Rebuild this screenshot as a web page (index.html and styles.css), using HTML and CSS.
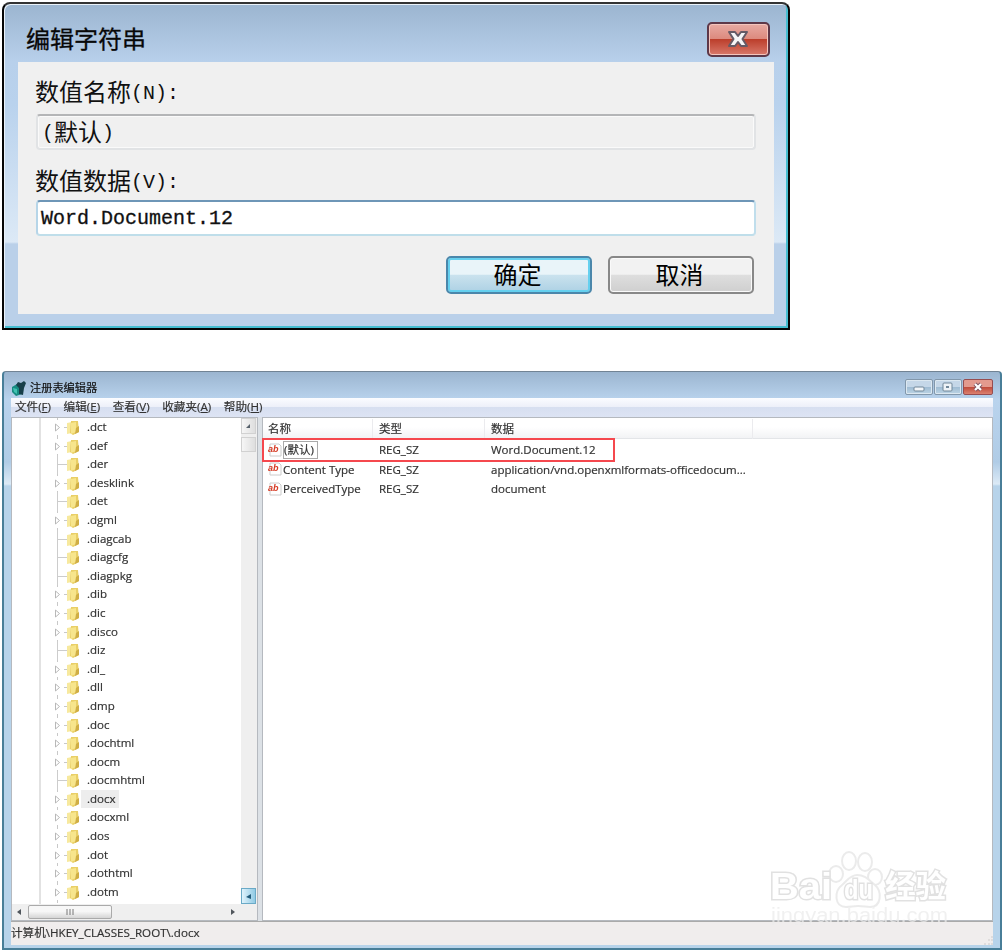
FILE: index.html
```html
<!DOCTYPE html>
<html lang="zh-CN">
<head>
<meta charset="utf-8">
<title>注册表编辑器</title>
<link rel="stylesheet" href="styles.css">
</head>
<body>
<main class="page">
<section class="dialog">
  <header class="dialog-title"><h1>编辑字符串</h1>
    <button class="dialog-close" aria-label="关闭"><svg width="24" height="20" viewBox="0 0 24 20"><path d="M2 2h6l3 4 3-4h6l-4.500 7 4.500 7h-6l-3-4-3 4H2l4.500-7z" fill="#f5f5f7" stroke="#655a66" stroke-width="2" stroke-linejoin="round"/></svg></button>
  </header>
  <div class="client">
    <div class="label">数值名称<span>(N):</span></div>
    <div class="field readonly"><span>(</span>默认<span>)</span></div>
    <div class="label second">数值数据<span>(V):</span></div>
    <div class="field edit">Word.Document.12</div>
    <div class="actions"><button class="btn primary">确定</button><button class="btn">取消</button></div>
  </div>
</section>

<section class="regedit">
  <header class="titlebar">
    <svg class="app-icon" width="16" height="16" viewBox="0 0 16 16"><path d="M1 7l5-3 4 2 1 8-6 2-4-4z" fill="#178b82"/><path d="M7 2l3 1 3-2 2 2-2 5-1 7-4-1V8L5 5z" fill="#173f49"/><path d="M2 8l4 1v5l-3-2z" fill="#40c4b2"/></svg>
    <span class="caption">注册表编辑器</span>
    <div class="controls">
      <i><svg width="26" height="14"><rect x="8" y="7" width="10" height="4" rx="1" fill="#f2f5f8" stroke="#718799"/></svg></i>
      <i><svg width="26" height="14"><rect x="8" y="3" width="9" height="8" rx="1" fill="#eef3f7" stroke="#718799"/><rect x="11" y="6" width="3" height="2" fill="#718799"/></svg></i>
      <i class="red"><svg width="28" height="14"><path d="M11 4l6 6m0-6l-6 6" stroke="#7d5360" stroke-width="4"/><path d="M11 4l6 6m0-6l-6 6" stroke="#fff" stroke-width="2.200"/></svg></i>
    </div>
  </header>
  <nav class="menu"><span>文件(<u>F</u>)</span><span>编辑(<u>E</u>)</span><span>查看(<u>V</u>)</span><span>收藏夹(<u>A</u>)</span><span>帮助(<u>H</u>)</span></nav>
  <div class="panes">
    <div class="left">
      <div class="treewrap">
        <div class="tree" id="tree"></div>
        <div class="vscroll"><b class="up"><svg width="14" height="14"><path d="M4 9l4-4v4z" fill="#56616b"/></svg></b><b class="vthumb"></b><b class="down"><svg width="14" height="14"><path d="M4 8l5-3v5z" fill="#225b7a"/></svg></b></div>
      </div>
      <div class="hscroll"><svg width="14" height="14"><path d="M9 4v6L5 7z" fill="#50565c"/></svg><b class="hthumb"><svg width="8" height="6"><path d="M1 0v6M4 0v6M7 0v6" stroke="#777"/></svg></b><svg class="right-arrow" width="14" height="14"><path d="M5 4v6l4-3z" fill="#50565c"/></svg></div>
    </div>
    <div class="values">
      <div class="columns heading"><span class="zh">名称</span><span class="zh">类型</span><span class="zh last">数据</span></div>
      <div class="columns row"><span class="name"><svg class="ab" width="14" height="14" viewBox="0 0 14 14"><path d="M2 1h9l2 2v10H2z" fill="#fff" stroke="#ccc"/><text x="0" y="9">ab</text></svg><em class="focus">(默认)</em></span><span>REG_SZ</span><span>Word.Document.12</span></div>
      <div class="columns row"><span class="name"><svg class="ab" width="14" height="14" viewBox="0 0 14 14"><path d="M2 1h9l2 2v10H2z" fill="#fff" stroke="#ccc"/><text x="0" y="9">ab</text></svg><em>Content Type</em></span><span>REG_SZ</span><span>application/vnd.openxmlformats-officedocum...</span></div>
      <div class="columns row"><span class="name"><svg class="ab" width="14" height="14" viewBox="0 0 14 14"><path d="M2 1h9l2 2v10H2z" fill="#fff" stroke="#ccc"/><text x="0" y="9">ab</text></svg><em>PerceivedType</em></span><span>REG_SZ</span><span>document</span></div>
      <div class="highlight"></div>
    </div>
  </div>
  <footer class="status"><span>计算机\HKEY_CLASSES_ROOT\.docx</span><svg width="10" height="10"><path d="M1 9h2M5 9h2M5 5h2M8 9h2M8 5h2M8 2h2" stroke="#dfdcdc" stroke-width="2"/></svg></footer>
  <svg class="watermark" width="186" height="92" viewBox="0 0 186 92">
    <g fill="#fff" stroke="#e5e5e5" stroke-width="2">
      <ellipse cx="69" cy="41" rx="7" ry="8"/><ellipse cx="82" cy="28" rx="7" ry="9"/><ellipse cx="98" cy="29" rx="7" ry="9"/><ellipse cx="108" cy="44" rx="7" ry="8"/>
      <path d="M90 42c-7 0-10 6-15 10-8 6-8 22 4 22 5 0 7-1 12-1s8 1 12 1c12 0 12-16 5-22-6-5-10-10-18-10z"/>
    </g>
    <g class="wm-logo"><text x="3" y="66" textLength="62" lengthAdjust="spacingAndGlyphs">Bai</text><text class="du" x="77" y="66" textLength="29" lengthAdjust="spacingAndGlyphs">du</text><text class="exp" x="118" y="64" textLength="61" lengthAdjust="spacingAndGlyphs">经验</text></g>
    <text class="wm-url" x="4" y="89" textLength="177" lengthAdjust="spacingAndGlyphs">jingyan.baidu.com</text>
  </svg>
</section>
</main>
<script src="tree.js"></script>
</body>
</html>
```
FILE: tree.js
```js
const keys = ["dct","def","-der","desklink","-det","dgml","-diagcab","-diagcfg","-diagpkg","dib","dic","disco","-diz","dl_","dll","dmp","doc","dochtml","docm","-docmhtml","docx","docxml","dos","dot","dothtml","dotm",""];
document.getElementById("tree").innerHTML = keys.map(key => {
  const leaf = key.startsWith("-");
  const name = key.replace("-", "");
  const branch = leaf
    ? '<path d="M4.500 0v19M5 9.500h9" stroke="#ccc"/>'
    : '<path d="M4.500 0v2M4.500 17v2M11 9.500h3" stroke="#c8c8c8"/><path d="M2.500 6l4 3.500-4 3.500z" fill="#fff" stroke="#b8b8b8"/>';
  return `<div class="node${name === "docx" ? " selected" : ""}"><svg width="28" height="19">${branch}<path d="M14 5l5-1v11l-5 1z" fill="#f7e99e"/><path d="M18 3h7l1 11-6 3-3-2z" fill="#e9cf67"/><path d="M18 5l5-1v10l-5 2z" fill="#f7e58c"/><path d="M23 10l3-2v6l-4 2z" fill="#cfae45"/></svg><span>${name ? "." + name : ""}</span></div>`;
}).join("");
```
FILE: styles.css
```css
* { box-sizing: border-box; }
body { margin: 0; background: #fff; font-family: "Open Sans", "Noto Sans CJK SC", sans-serif; }
button { font: inherit; padding: 0; }
.page { width: 1006px; height: 952px; padding: 2px; overflow: hidden; }
.dialog { width: 788px; height: 328px; border: 2px solid #050505; border-top-color: #333; border-radius: 8px 8px 0 0; padding: 0 14px; background: linear-gradient(#9bb5d0 0, #b8d0eb 58px, #b9d2ed 100px, #dce9f6 238px, #bad0e9 240px); box-shadow: inset 1px 1px #eaf2f9, inset -2px -2px #46bdd0; }
.dialog-title { height: 58px; display: flex; justify-content: space-between; padding: 0 0 0 8px; }
.dialog-title h1 { margin: 16px 0 0; font: 400 24px/36px "Noto Sans CJK SC", sans-serif; color: #080808; -webkit-text-stroke: .3px #080808; }
.dialog-close { display: grid; place-items: center; width: 63px; height: 35px; margin-top: 18px; margin-right: 4px; border: 2px solid #5e3848; border-radius: 5px; box-shadow: inset 0 0 0 1px #f4c5bd; background: linear-gradient(#e8aaa2, #dc897d 49%, #bc3f2c 50%, #d8786a); }
.client { height: 252px; padding: 12px 18px 12px 17px; background: #f0f0f0; font: 20px/36px "Liberation Mono", "Noto Sans CJK SC", monospace; color: #111; }
.label { height: 36px; font: 24px/34px "Noto Sans CJK SC", sans-serif; }
.client span { font: 20px/20px "Liberation Mono", monospace; vertical-align: 2px; }
.field { height: 36px; width: 720px; margin-left: 1px; border: 2px solid #e1e3e5; border-radius: 4px; line-height: 34px; padding-left: 3px; }
.readonly { margin-top: 4px; padding-left: 4px; border-top-color: #b4b5b7; box-shadow: inset 0 0 0 1px #fafafa; font: 24px/29px "Noto Sans CJK SC", sans-serif; }
.second { margin-top: 13px; }
.edit { margin-top: 1px; background: #fff; border-color: #9fc2de #c0deec #bfdeea #b6d5e8; border-top-color: #6e96b7; -webkit-text-stroke: .3px #111; }
.actions { display: flex; justify-content: flex-end; gap: 16px; margin-top: 20px; padding-right: 2px; }
.btn { width: 146px; height: 38px; border: 2px solid #888; border-radius: 5px; background: linear-gradient(#f2f2f2 0 48%, #dedede 50%, #cfcfcf); box-shadow: inset 0 0 0 1px #fafafa; font: 24px/30px "Noto Sans CJK SC", sans-serif; padding: 0 3px 2px 0; }
.primary { border-color: #4b87ab; background: linear-gradient(#e9f4f9 0 48%, #cae2ee 50%, #add1e4); box-shadow: inset 0 0 0 2px #65d0ef; }

.regedit { position: relative; width: 1000px; height: 579px; margin-top: 41px; border: 2px solid #487e98; border-top: 1px solid #718394; border-radius: 4px 4px 0 0; padding: 0 7px; background: linear-gradient(#9bb5d0 0, #b9d3ed 28px, #b0cce6 90px, #dceaf6 112px, #b7d3ea 114px); color: #333; font-size: 11.500px; }
.titlebar { height: 26px; display: flex; align-items: flex-start; }
.app-icon { margin-top: 8px; filter: blur(.7px); }
.caption { margin: 7px 0 0 3px; font: 11.200px/17px "Noto Sans CJK SC", sans-serif; color: #111; -webkit-text-stroke: .2px #111; filter: blur(.7px); }
.controls { display: flex; gap: 1px; margin-left: auto; margin-top: 7px; filter: blur(.6px); }
.controls i { height: 16px; border: 1px solid #8297ab; border-radius: 2px; background: linear-gradient(#c5d7e8 0 48%, #9ebbd2 50%, #bdd4e5); box-shadow: inset 0 0 0 1px #dce8f1; }
.controls svg { display: block; }
.controls .red { border-color: #974d50; background: linear-gradient(#e39a8e 0 48%, #bf4939 50%, #db8170); box-shadow: none; }
.menu { height: 19px; display: flex; gap: 12.600px; padding: 0 4px; background: linear-gradient(#fbfcff, #edf0f9 45%, #d7dff0 50%, #dde4f4); font: 11.600px/18px "Open Sans", "Noto Sans CJK SC", sans-serif; }
.menu span { white-space: nowrap; -webkit-text-stroke: .2px #333; filter: blur(.7px); }
.panes { display: grid; grid-template-columns: 247px 731px; gap: 4px; height: 504px; background: #dce1e6; }
.left, .values { border: 1px solid #b5b9bf; background: #fff; min-width: 0; }
.left { display: grid; grid-template-rows: 486px 16px; }
.treewrap { display: grid; grid-template-columns: 1fr 16px; min-height: 0; }
.tree { height: 486px; overflow: hidden; padding-left: 27px; background: linear-gradient(90deg, transparent 27px, #e2e2e2 27px 29px, transparent 29px); }
.node { display: flex; height: 18.600px; padding-left: 14px; line-height: 18px; }
.node svg { flex: none; filter: blur(.7px); }
.node span { height: 18px; padding: 0 3px 0 6px; -webkit-text-stroke: .2px #333; filter: blur(.7px); }
.selected span { background: #ededed; }
.vscroll { display: flex; flex-direction: column; background: #efefef; }
.vscroll b { width: 15px; height: 16px; border: 1px solid #d1d1d1; background: linear-gradient(90deg, #f6f6f6, #dedede); }
.vscroll .vthumb { height: 15px; margin-top: 3px; }
.vscroll svg { display: block; }
.vscroll .down { border-color: #6aaac7; background: linear-gradient(90deg, #dff3fc, #91cae4); margin-top: auto; }
.vscroll, .hscroll { filter: blur(.5px); }
.hscroll { display: flex; align-items: center; background: #efefef; }
.hthumb { display: grid; place-items: center; width: 84px; height: 14px; margin-left: 2px; border: 1px solid #aaa; border-radius: 2px; background: linear-gradient(#f7f7f7 0 45%, #d5d5d5); }
.right-arrow { margin-left: auto; margin-right: 17px; }
.values { position: relative; }
.columns { display: grid; grid-template-columns: 111px 112px 1fr; padding-left: 5px; }
.heading { height: 21px; padding-top: 1px; background: linear-gradient(#fff 0 45%, #f2f3f5); border-bottom: 1px solid #e3e5e8; line-height: 20px; }
.heading .zh { border-right: 1px solid #ebebee; margin-right: 6px; }
.heading .last { width: 262px; }
.row { height: 19.500px; line-height: 21px; white-space: nowrap; }
.columns span { -webkit-text-stroke: .2px #333; filter: blur(.7px); }
.name { display: flex; align-items: center; gap: 1px; }
.name em { font-style: normal; }
.focus { border: 1px solid #aaa; height: 18px; line-height: 16px; padding-right: 3px; }
.ab { flex: none; }
.ab text { font: italic bold 9px "Liberation Sans", sans-serif; fill: #d63a24; stroke: none; }
.highlight { position: absolute; left: -1px; top: 20px; width: 353px; height: 24px; border: 2px solid #f5484e; filter: blur(.4px); }
.status { height: 24px; display: flex; align-items: flex-end; justify-content: space-between; background: #f0eded; border-top: 1px solid #aaa; }
.status span { line-height: 21px; align-self: flex-start; -webkit-text-stroke: .2px #333; filter: blur(.7px); font-size: 11.600px; }
.watermark { position: absolute; left: 763px; top: 461px; opacity: .75; filter: blur(.7px); }
.wm-logo text { font: bold 37px "Liberation Sans", sans-serif; fill: #fff; stroke: #d8d8d8; stroke-width: 3px; paint-order: stroke; }
.wm-logo .du { font-size: 27px; }
.wm-logo .exp { font: bold 31px "Noto Sans CJK SC", sans-serif; }
.wm-url { font: 20px "Liberation Sans", sans-serif; fill: #ececec; }
```
